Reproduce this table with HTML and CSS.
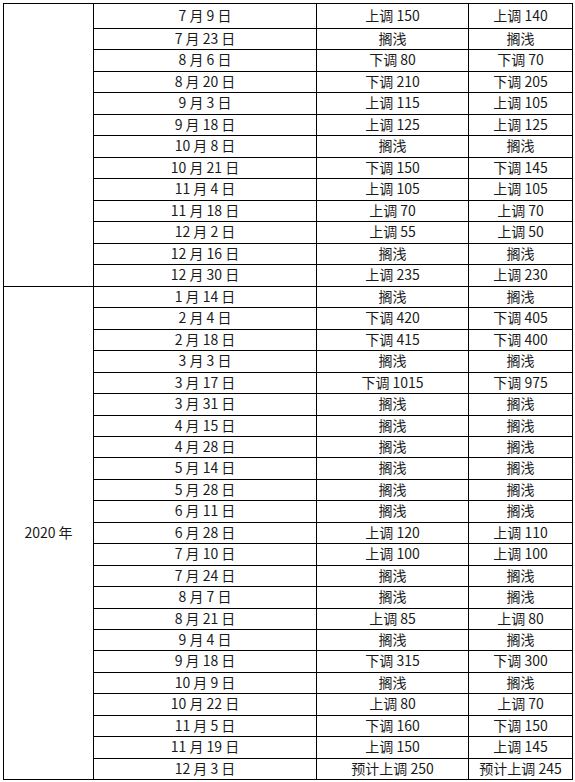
FILE: index.html
```html
<!DOCTYPE html>
<html lang="zh-CN">
<head>
<meta charset="utf-8">
<title>调价表</title>
<link rel="stylesheet" href="styles.css">
</head>
<body>
<div class="sheet">
  <div class="grid">
    <div class="year y2019"></div>
    <div class="year y2020">2020 年</div>

    <div class="c">7 月 9 日</div><div class="c">上调 150</div><div class="c">上调 140</div>
    <div class="c">7 月 23 日</div><div class="c">搁浅</div><div class="c">搁浅</div>
    <div class="c">8 月 6 日</div><div class="c">下调 80</div><div class="c">下调 70</div>
    <div class="c">8 月 20 日</div><div class="c">下调 210</div><div class="c">下调 205</div>
    <div class="c">9 月 3 日</div><div class="c">上调 115</div><div class="c">上调 105</div>
    <div class="c">9 月 18 日</div><div class="c">上调 125</div><div class="c">上调 125</div>
    <div class="c">10 月 8 日</div><div class="c">搁浅</div><div class="c">搁浅</div>
    <div class="c">10 月 21 日</div><div class="c">下调 150</div><div class="c">下调 145</div>
    <div class="c">11 月 4 日</div><div class="c">上调 105</div><div class="c">上调 105</div>
    <div class="c">11 月 18 日</div><div class="c">上调 70</div><div class="c">上调 70</div>
    <div class="c">12 月 2 日</div><div class="c">上调 55</div><div class="c">上调 50</div>
    <div class="c">12 月 16 日</div><div class="c">搁浅</div><div class="c">搁浅</div>
    <div class="c">12 月 30 日</div><div class="c">上调 235</div><div class="c">上调 230</div>

    <div class="c">1 月 14 日</div><div class="c">搁浅</div><div class="c">搁浅</div>
    <div class="c">2 月 4 日</div><div class="c">下调 420</div><div class="c">下调 405</div>
    <div class="c">2 月 18 日</div><div class="c">下调 415</div><div class="c">下调 400</div>
    <div class="c">3 月 3 日</div><div class="c">搁浅</div><div class="c">搁浅</div>
    <div class="c">3 月 17 日</div><div class="c">下调 1015</div><div class="c">下调 975</div>
    <div class="c">3 月 31 日</div><div class="c">搁浅</div><div class="c">搁浅</div>
    <div class="c">4 月 15 日</div><div class="c">搁浅</div><div class="c">搁浅</div>
    <div class="c">4 月 28 日</div><div class="c">搁浅</div><div class="c">搁浅</div>
    <div class="c">5 月 14 日</div><div class="c">搁浅</div><div class="c">搁浅</div>
    <div class="c">5 月 28 日</div><div class="c">搁浅</div><div class="c">搁浅</div>
    <div class="c">6 月 11 日</div><div class="c">搁浅</div><div class="c">搁浅</div>
    <div class="c">6 月 28 日</div><div class="c">上调 120</div><div class="c">上调 110</div>
    <div class="c">7 月 10 日</div><div class="c">上调 100</div><div class="c">上调 100</div>
    <div class="c">7 月 24 日</div><div class="c">搁浅</div><div class="c">搁浅</div>
    <div class="c">8 月 7 日</div><div class="c">搁浅</div><div class="c">搁浅</div>
    <div class="c">8 月 21 日</div><div class="c">上调 85</div><div class="c">上调 80</div>
    <div class="c">9 月 4 日</div><div class="c">搁浅</div><div class="c">搁浅</div>
    <div class="c">9 月 18 日</div><div class="c">下调 315</div><div class="c">下调 300</div>
    <div class="c">10 月 9 日</div><div class="c">搁浅</div><div class="c">搁浅</div>
    <div class="c">10 月 22 日</div><div class="c">上调 80</div><div class="c">上调 70</div>
    <div class="c">11 月 5 日</div><div class="c">下调 160</div><div class="c">下调 150</div>
    <div class="c">11 月 19 日</div><div class="c">上调 150</div><div class="c">上调 145</div>
    <div class="c">12 月 3 日</div><div class="c">预计上调 250</div><div class="c">预计上调 245</div>
  </div>
</div>
</body>
</html>
```

FILE: styles.css
```css
html, body {
  margin: 0;
  padding: 0;
  background: #fff;
}

.sheet {
  padding: 3px 0 0 3px;
  font-family: "Noto Sans CJK SC", "DejaVu Sans", sans-serif;
  font-size: 14px;
  color: #1a1a1a;
}

.grid {
  display: grid;
  width: 568px;
  padding: 1px;
  gap: 1px;
  background: #000;
  grid-template-columns: 89px 222px 151px 103px;
  grid-template-rows:
    24px
    20px 21px 20px 21px 20px 21px 20px 21px 20px 21px 20px 21px
    20px 21px 20px 21px 20px 21px 20px 20px 21px 20px 21px 20px
    21px 20px 21px 20px 20px 21px 20px 21px 20px 21px 20px;
}

.grid > div {
  background: #fff;
  display: flex;
  align-items: center;
  justify-content: center;
  line-height: 1;
  white-space: nowrap;
  padding-bottom: 3px;
}

.year {
  grid-column: 1;
}

.y2019 {
  grid-row: 1 / span 13;
}

.y2020 {
  grid-row: 14 / span 23;
}
```
